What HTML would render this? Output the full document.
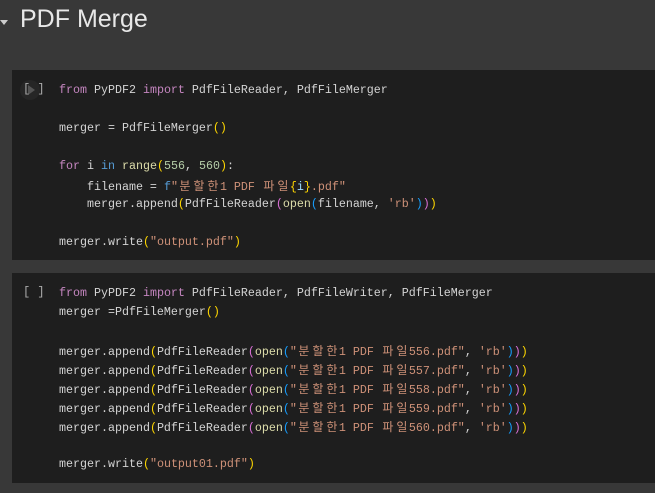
<!DOCTYPE html>
<html><head><meta charset="utf-8"><style>
html,body{margin:0;padding:0;}
body{width:655px;height:493px;background:#383838;position:relative;overflow:hidden;font-family:"Liberation Sans",sans-serif;}
.h{position:absolute;left:20px;top:5px;font-size:25px;color:#e8e8e8;}
.tri{position:absolute;left:0;top:20px;width:0;height:0;border-left:4px solid transparent;border-right:4px solid transparent;border-top:5px solid #ccc;}
.cell{position:absolute;left:12px;right:0;background:#1e1e1e;}
.code{position:absolute;left:47px;top:2px;font-family:"Liberation Mono","Noto Sans CJK KR",monospace;font-size:11.67px;color:#d4d4d4;white-space:pre;}
.l{position:absolute;left:0;height:19px;line-height:19px;}
.k{color:#c586c0}.s{color:#ce9178}.y{color:#ffd700}.p{color:#da70d6}.b{color:#179fff}.f{color:#dcdcaa}.n{color:#b5cea8}.kw{color:#569cd6}.v{color:#9cdcfe}
.ko{display:inline-block;width:14px;text-align:center;font-family:"Noto Sans CJK KR",sans-serif;font-size:12px;}
.br{position:absolute;left:11px;font-family:"Liberation Mono",monospace;font-size:12px;color:#aaa;}
.circ{position:absolute;left:8px;top:10px;width:20px;height:20px;border-radius:50%;background:#262626;}
.play{position:absolute;left:16px;top:15px;width:0;height:0;border-top:5px solid transparent;border-bottom:5px solid transparent;border-left:7px solid #555;}
</style></head><body>
<div class="tri"></div>
<div class="h">PDF Merge</div>

<div class="cell" style="top:70px;height:190px;">
<div class="circ"></div><div class="play"></div>
<div class="br" style="top:12px;">[ ]</div>
<div class="code">
<div class="l" style="top:9px"><span class="k">from</span> PyPDF2 <span class="k">import</span> PdfFileReader, PdfFileMerger</div>
<div class="l" style="top:47px">merger = PdfFileMerger<span class="y">()</span></div>
<div class="l" style="top:85px"><span class="k">for</span> i <span class="kw">in</span> <span class="f">range</span><span class="y">(</span><span class="n">556</span>, <span class="n">560</span><span class="y">)</span>:</div>
<div class="l" style="top:104px">    filename = <span class="kw">f</span><span class="s">"<span class="ko">분</span><span class="ko">할</span><span class="ko">한</span>1 PDF <span class="ko">파</span><span class="ko">일</span></span><span class="y">{</span><span class="v">i</span><span class="y">}</span><span class="s">.pdf"</span></div>
<div class="l" style="top:123px">    merger.append<span class="y">(</span>PdfFileReader<span class="p">(</span><span class="f">open</span><span class="b">(</span>filename, <span class="s">'rb'</span><span class="b">)</span><span class="p">)</span><span class="y">)</span></div>
<div class="l" style="top:161px">merger.write<span class="y">(</span><span class="s">"output.pdf"</span><span class="y">)</span></div>
</div></div>

<div class="cell" style="top:273px;height:210px;">
<div class="br" style="top:12px;">[ ]</div>
<div class="code">
<div class="l" style="top:9px"><span class="k">from</span> PyPDF2 <span class="k">import</span> PdfFileReader, PdfFileWriter, PdfFileMerger</div>
<div class="l" style="top:28px">merger =PdfFileMerger<span class="y">()</span></div>
<div class="l" style="top:66px">merger.append<span class="y">(</span>PdfFileReader<span class="p">(</span><span class="f">open</span><span class="b">(</span><span class="s">"<span class="ko">분</span><span class="ko">할</span><span class="ko">한</span>1 PDF <span class="ko">파</span><span class="ko">일</span>556.pdf"</span>, <span class="s">'rb'</span><span class="b">)</span><span class="p">)</span><span class="y">)</span></div>
<div class="l" style="top:85px">merger.append<span class="y">(</span>PdfFileReader<span class="p">(</span><span class="f">open</span><span class="b">(</span><span class="s">"<span class="ko">분</span><span class="ko">할</span><span class="ko">한</span>1 PDF <span class="ko">파</span><span class="ko">일</span>557.pdf"</span>, <span class="s">'rb'</span><span class="b">)</span><span class="p">)</span><span class="y">)</span></div>
<div class="l" style="top:104px">merger.append<span class="y">(</span>PdfFileReader<span class="p">(</span><span class="f">open</span><span class="b">(</span><span class="s">"<span class="ko">분</span><span class="ko">할</span><span class="ko">한</span>1 PDF <span class="ko">파</span><span class="ko">일</span>558.pdf"</span>, <span class="s">'rb'</span><span class="b">)</span><span class="p">)</span><span class="y">)</span></div>
<div class="l" style="top:123px">merger.append<span class="y">(</span>PdfFileReader<span class="p">(</span><span class="f">open</span><span class="b">(</span><span class="s">"<span class="ko">분</span><span class="ko">할</span><span class="ko">한</span>1 PDF <span class="ko">파</span><span class="ko">일</span>559.pdf"</span>, <span class="s">'rb'</span><span class="b">)</span><span class="p">)</span><span class="y">)</span></div>
<div class="l" style="top:142px">merger.append<span class="y">(</span>PdfFileReader<span class="p">(</span><span class="f">open</span><span class="b">(</span><span class="s">"<span class="ko">분</span><span class="ko">할</span><span class="ko">한</span>1 PDF <span class="ko">파</span><span class="ko">일</span>560.pdf"</span>, <span class="s">'rb'</span><span class="b">)</span><span class="p">)</span><span class="y">)</span></div>
<div class="l" style="top:180px">merger.write<span class="y">(</span><span class="s">"output01.pdf"</span><span class="y">)</span></div>
</div></div>
</body></html>
